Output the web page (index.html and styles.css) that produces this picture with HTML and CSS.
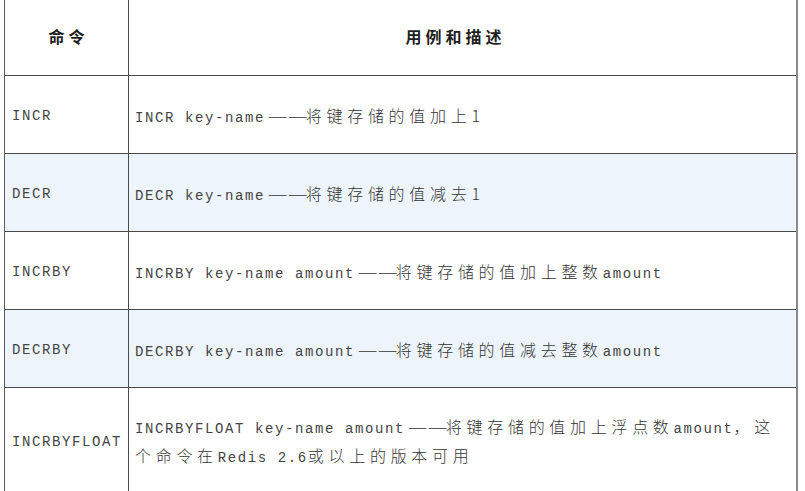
FILE: index.html
```html
<!DOCTYPE html>
<html lang="zh-CN">
<head>
<meta charset="utf-8">
<title>Redis 命令</title>
<link rel="stylesheet" href="styles.css">
</head>
<body>
<div class="table">
  <div class="cell head c1"><span class="zh b">命令</span></div>
  <div class="cell head c2"><span class="zh b">用例和描述</span></div>

  <div class="cell c1"><span class="mono">INCR</span></div>
  <div class="cell c2"><span class="txt"><span class="mono">INCR key-name</span><span class="zh"><span class="dash">—</span><span class="dash">—</span>将键存储的值加上1</span></span></div>

  <div class="cell c1 alt"><span class="mono">DECR</span></div>
  <div class="cell c2 alt"><span class="txt"><span class="mono">DECR key-name</span><span class="zh"><span class="dash">—</span><span class="dash">—</span>将键存储的值减去1</span></span></div>

  <div class="cell c1"><span class="mono">INCRBY</span></div>
  <div class="cell c2"><span class="txt"><span class="mono">INCRBY key-name amount</span><span class="zh"><span class="dash">—</span><span class="dash">—</span>将键存储的值加上整数</span><span class="mono">amount</span></span></div>

  <div class="cell c1 alt"><span class="mono">DECRBY</span></div>
  <div class="cell c2 alt"><span class="txt"><span class="mono">DECRBY key-name amount</span><span class="zh"><span class="dash">—</span><span class="dash">—</span>将键存储的值减去整数</span><span class="mono">amount</span></span></div>

  <div class="cell c1 last"><span class="mono">INCRBYFLOAT</span></div>
  <div class="cell c2 last"><span class="txt"><span class="mono">INCRBYFLOAT key-name amount</span><span class="zh"><span class="dash">—</span><span class="dash">—</span>将键存储的值加上浮点数</span><span class="mono">amount</span><span class="zh">，这个命令在</span><span class="mono">Redis 2.6</span><span class="zh">或以上的版本可用</span></span></div>
</div>
</body>
</html>
```

FILE: styles.css
```css
html, body {
  margin: 0;
  padding: 0;
  background: #ffffff;
}

.table {
  display: grid;
  grid-template-columns: 124px 667px;
  grid-template-rows: 76px repeat(4, 78px) 108px;
  margin-left: 4px;
  width: max-content;
  border-left: 1px solid #5a5a5a;
  border-right: 2px solid #8a8a8a;
  color: #353535;
}

.cell {
  display: flex;
  align-items: center;
  border-bottom: 1px solid #4a4a4a;
  box-sizing: border-box;
  background: #ffffff;
  padding-top: 3px;
}

.cell.alt {
  background: #eef4fb;
}

.c1 {
  border-right: 1px solid #4a4a4a;
  padding-left: 7px;
}

.c2 {
  padding-left: 6px;
  padding-right: 14px;
}

.head {
  justify-content: center;
  padding-left: 0;
  padding-top: 0;
  padding-bottom: 3px;
}

.head.c1 {
  padding-left: 4px;
}

.last {
  border-bottom: none;
  padding-top: 0;
}

.txt {
  line-height: 26px;
}

.mono {
  font-family: "Courier New", "Nimbus Mono PS", "FreeMono", "Liberation Mono", monospace;
  font-size: 14px;
  letter-spacing: 1.6px;
  color: #444444;
}

.zh {
  font-family: "Noto Sans CJK SC", sans-serif;
  font-size: 16px;
  font-weight: 300;
  letter-spacing: 4.7px;
}

.dash {
  display: inline-block;
  width: 20.4px;
  letter-spacing: 0;
  text-indent: 2px;
  transform: scaleX(1.4);
  transform-origin: left center;
}

.zh.b {
  font-weight: 700;
  color: #1e1e1e;
  font-size: 16px;
  letter-spacing: 4px;
}
```
